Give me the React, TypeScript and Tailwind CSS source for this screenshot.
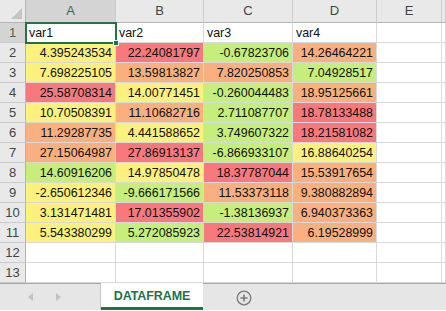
import React from 'react'

type Tone = 'y' | 'r' | 'o' | 'g'

const toneClass: Record<Tone, string> = {
  y: 'bg-[#fcf07e]',
  r: 'bg-[#f7797c]',
  o: 'bg-[#f9af7e]',
  g: 'bg-[#c6ee7c]',
}

const columns = ['A', 'B', 'C', 'D', 'E', '']

const data: [string, Tone][][] = [
  [['4.395243534', 'y'], ['22.24081797', 'r'], ['-0.67823706', 'g'], ['14.26464221', 'o']],
  [['7.698225105', 'y'], ['13.59813827', 'o'], ['7.820250853', 'o'], ['7.04928517', 'g']],
  [['25.58708314', 'r'], ['14.00771451', 'y'], ['-0.260044483', 'g'], ['18.95125661', 'o']],
  [['10.70508391', 'y'], ['11.10682716', 'o'], ['2.711087707', 'g'], ['18.78133488', 'r']],
  [['11.29287735', 'o'], ['4.441588652', 'y'], ['3.749607322', 'g'], ['18.21581082', 'r']],
  [['27.15064987', 'o'], ['27.86913137', 'r'], ['-6.866933107', 'g'], ['16.88640254', 'y']],
  [['14.60916206', 'g'], ['14.97850478', 'y'], ['18.37787044', 'r'], ['15.53917654', 'o']],
  [['-2.650612346', 'y'], ['-9.666171566', 'g'], ['11.53373118', 'o'], ['9.380882894', 'o']],
  [['3.131471481', 'y'], ['17.01355902', 'r'], ['-1.38136937', 'g'], ['6.940373363', 'o']],
  [['5.543380299', 'y'], ['5.272085923', 'g'], ['22.53814921', 'r'], ['6.19528999', 'o']],
]

const cell = 'border-r border-b border-[#d9d9d9] flex items-center pt-px'

function ColumnHeaders() {
  return (
    <>
      <div className="bg-[#e9e9e9] border-r border-b border-[#b4b4b4] relative">
        <div className="absolute right-[3px] bottom-[3px] w-0 h-0 border-l-[11px] border-l-transparent border-b-[11px] border-b-[#c4c4c4]" />
      </div>
      {columns.map((c, i) => (
        <div
          key={i}
          className={`border-b border-[#b4b4b4] border-r border-r-[#cccccc] flex items-center justify-center text-[13px] ${
            i === 0 ? 'bg-[#d4d4d4] text-[#3d6b50]' : 'bg-[#e9e9e9] text-[#444]'
          }`}
        >
          {c}
        </div>
      ))}
    </>
  )
}

function RowHeader({ n }: { n: number }) {
  return (
    <div
      className={`border-r border-r-[#b4b4b4] border-b border-b-[#cccccc] flex items-center justify-center text-[13px] pt-px ${
        n === 1 ? 'bg-[#d4d4d4] text-[#3d6b50]' : 'bg-[#e9e9e9] text-[#444]'
      }`}
    >
      {n}
    </div>
  )
}

function TabBar() {
  return (
    <div className="h-[27px] bg-[#e6e6e6] border-t border-[#a6a6a6] flex">
      <div className="w-[101px] flex items-center border-r border-[#c6c6c6]">
        <div className="ml-[28px] w-0 h-0 border-y-[4px] border-y-transparent border-r-[5px] border-r-[#c2c2c2]" />
        <div className="ml-[23px] w-0 h-0 border-y-[4px] border-y-transparent border-l-[5px] border-l-[#c2c2c2]" />
      </div>
      <div className="w-[102px] -mt-px bg-white flex flex-col">
        <div className="flex-1 flex items-center justify-center text-[12.5px] font-bold text-[#217346] tracking-[-0.1px] pt-[2px]">
          DATAFRAME
        </div>
        <div className="h-[3px] bg-[#217346]" />
      </div>
      <div className="flex-1 flex items-center pl-[33px] pt-[2px]">
        <svg width="16" height="16" viewBox="0 0 16 16" fill="none" stroke="#7a7a7a" strokeWidth="1.3">
          <circle cx="8" cy="8" r="6.8" />
          <path d="M8 4.5v7M4.5 8h7" strokeWidth="1.6" />
        </svg>
      </div>
    </div>
  )
}

export default function App() {
  return (
    <div
      className="w-[446px] h-[311px] bg-white overflow-hidden flex flex-col text-[#111]"
      style={{ fontFamily: '"Liberation Sans", Arial, sans-serif' }}
    >
      <div className="relative">
        <div className="grid grid-cols-[26px_90px_88px_89px_84px_65px_1fr] grid-rows-[23px_repeat(13,20px)] text-[12.4px]">
          <ColumnHeaders />

          <RowHeader n={1} />
          {['var1', 'var2', 'var3', 'var4'].map(v => (
            <div key={v} className={`${cell} pl-[3px]`}>{v}</div>
          ))}
          <div className={cell} />
          <div className={cell} />

          {data.map((row, r) => (
            <React.Fragment key={r}>
              <RowHeader n={r + 2} />
              {row.map(([v, t], c) => (
                <div key={c} className={`${cell} justify-end pr-[3px] ${toneClass[t]}`}>{v}</div>
              ))}
              <div className={cell} />
              <div className={cell} />
            </React.Fragment>
          ))}

          {[12, 13].map(n => (
            <React.Fragment key={n}>
              <RowHeader n={n} />
              {columns.map((_, i) => (
                <div key={i} className={cell} />
              ))}
            </React.Fragment>
          ))}
        </div>

        {/* active cell A1 */}
        <div className="absolute left-[25px] top-[22px] w-[92px] h-[22px] border-2 border-[#217346] pointer-events-none" />
        <div className="absolute left-[113px] top-[40px] w-[6px] h-[6px] bg-[#217346] border border-white" />
      </div>

      <TabBar />
    </div>
  )
}
